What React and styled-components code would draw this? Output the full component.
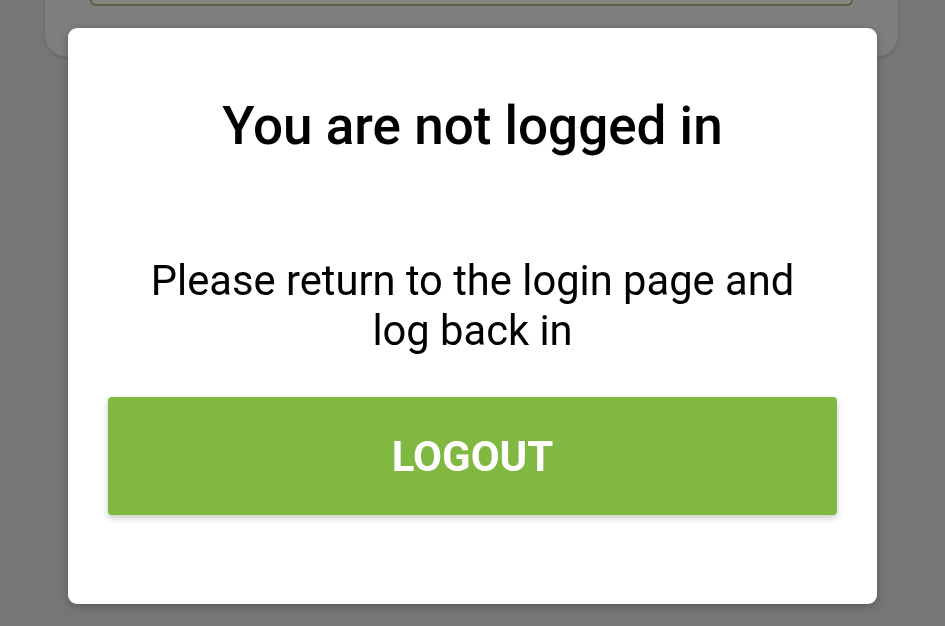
import styled, { createGlobalStyle } from 'styled-components'

const GlobalStyle = createGlobalStyle`
  html, body {
    margin: 0;
    height: 100%;
    background: #767676;
    font-family: Roboto, "Liberation Sans", sans-serif;
    overflow: hidden;
  }
`;

const App = () => {
  return (
    <Page>
      <GlobalStyle />
      <Card>
        <Field />
      </Card>
      <Backdrop>
        <Dialog>
          <Title>You are not logged in</Title>
          <Message>Please return to the login page and log back in</Message>
          <Button>LOGOUT</Button>
        </Dialog>
      </Backdrop>
    </Page>
  )
}

const Page = styled.div`
  height: 626px;
  padding: 0 47px 0 45px;
`;

const Card = styled.div`
  margin-top: -40px;
  height: 97px;
  box-sizing: border-box;
  padding: 0 45px;
  background: #7e7e7e;
  border-radius: 0 0 22px 22px;
  box-shadow: 0 2px 3px rgba(0, 0, 0, 0.12);
`;

const Field = styled.div`
  height: 46px;
  box-sizing: border-box;
  background: #84887c;
  border: 2px solid #5b6142;
  border-top: none;
  border-radius: 0 0 6px 6px;
`;

const Backdrop = styled.div`
  position: fixed;
  inset: 0;
  display: flex;
  justify-content: center;
  align-items: flex-start;
  padding-top: 28px;
`;

const Dialog = styled.div`
  width: 809px;
  height: 576px;
  box-sizing: border-box;
  padding: 68px 40px 0;
  background: #ffffff;
  border-radius: 9px;
  box-shadow: 0 2px 8px rgba(0, 0, 0, 0.25);
  display: flex;
  flex-direction: column;
  align-items: stretch;
`;

const Title = styled.h2`
  margin: 0;
  font-size: 53px;
  font-weight: 500;
  line-height: 60px;
  color: #000;
  text-align: center;
`;

const Message = styled.p`
  margin: 100px 10px 0;
  font-size: 41.7px;
  font-weight: 400;
  line-height: 50px;
  color: #000;
  text-align: center;
`;

const Button = styled.button`
  margin-top: 41px;
  height: 118px;
  border: none;
  border-radius: 4px;
  background: #80b842;
  color: #ffffff;
  font-family: Roboto, "Liberation Sans", sans-serif;
  font-size: 42px;
  font-weight: 700;
  box-shadow: 0 3px 6px rgba(0, 0, 0, 0.22);
`;

export default App;
